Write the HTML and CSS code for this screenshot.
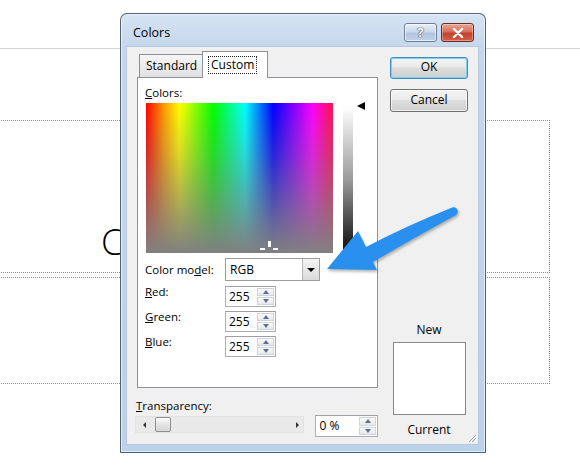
FILE: index.html
```html
<!DOCTYPE html>
<html>
<head>
<meta charset="utf-8">
<link rel="stylesheet" href="styles.css">
</head>
<body>
<div class="slide">
  <div class="topline"></div>
  <div class="ph ph-title"><span class="ph-text">C</span></div>
  <div class="ph ph-sub"></div>
</div>

<div class="dialog">
  <div class="titlebar">
    <span class="title">Colors</span>
    <div class="caption-btns">
      <div class="cbtn help">?</div>
      <div class="cbtn close">
        <svg width="12" height="10" viewBox="0 0 12 10"><path d="M2 1 L10 9 M10 1 L2 9" stroke="#fff" stroke-width="2.4" stroke-linecap="round"/></svg>
      </div>
    </div>
  </div>
  <div class="client">
    <div class="leftcol">
      <div class="tabs">
        <div class="tab">Standard</div>
        <div class="tab active"><span class="focus">Custom</span></div>
      </div>
      <div class="panel">
        <div class="lbl lbl-colors"><u>C</u>olors:</div>
        <div class="spec-row">
          <div class="spectrum">
            <span class="cross cv"></span>
            <span class="cross chl"></span>
            <span class="cross chr"></span>
          </div>
          <div class="lum"></div>
          <div class="lum-arrow"></div>
        </div>
        <div class="model-row">
          <div class="lbl rowlbl">Color mo<u>d</u>el:</div>
          <div class="select">
            <span class="sel-text">RGB</span>
            <span class="sel-btn"><span class="tri-down"></span></span>
          </div>
        </div>
        <div class="rgb-row first">
          <div class="lbl rowlbl"><u>R</u>ed:</div>
          <div class="spin"><span class="spin-val">255</span><span class="spinner"><span class="sp-up"><i></i></span><span class="sp-down"><i></i></span></span></div>
        </div>
        <div class="rgb-row">
          <div class="lbl rowlbl"><u>G</u>reen:</div>
          <div class="spin"><span class="spin-val">255</span><span class="spinner"><span class="sp-up"><i></i></span><span class="sp-down"><i></i></span></span></div>
        </div>
        <div class="rgb-row">
          <div class="lbl rowlbl"><u>B</u>lue:</div>
          <div class="spin"><span class="spin-val">255</span><span class="spinner"><span class="sp-up"><i></i></span><span class="sp-down"><i></i></span></span></div>
        </div>
      </div>
      <div class="lbl lbl-transp"><u>T</u>ransparency:</div>
      <div class="transp-row">
        <div class="slider">
          <span class="sl-left"></span>
          <span class="thumb"></span>
          <span class="sl-right"></span>
        </div>
        <div class="spin pct"><span class="spin-val">0 %</span><span class="spinner"><span class="sp-up"><i></i></span><span class="sp-down"><i></i></span></span></div>
      </div>
    </div>
    <div class="rightcol">
      <div class="btn default">OK</div>
      <div class="btn cancel">Cancel</div>
      <div class="preview">
        <div class="prev-lbl">New</div>
        <div class="prev-box"></div>
        <div class="prev-lbl cur">Current</div>
      </div>
    </div>
    <svg class="grip" width="10" height="10" viewBox="0 0 10 10">
      <path d="M9 2 L2 9 M9 5 L5 9" stroke="#9aa3ad" stroke-width="1"/>
      <path d="M10 3 L3 10 M10 6 L6 10" stroke="#fff" stroke-width="1"/>
    </svg>
  </div>
</div>

<svg class="arrow" width="580" height="469" viewBox="0 0 580 469">
  <path d="M327 269 L358 231 L366 247 Q406 226 451 208 A4 4 0 0 1 456 215 Q412 239 373 262 L377 270 Z" fill="#2a90ef"/>
</svg>
</body>
</html>
```

FILE: styles.css
```css
* { box-sizing: border-box; }
html, body { margin: 0; padding: 0; }
body {
  width: 580px;
  height: 469px;
  overflow: hidden;
  position: relative;
  background: #fff;
  font-family: "Open Sans", "Noto Sans", sans-serif;
  font-size: 11.5px;
  color: #000;
}
u { text-decoration: underline; text-underline-offset: 1px; }

/* background slide */
.topline { height: 1px; background: #d4d4d4; margin-top: 48px; }
.ph { border: 1px dotted #8a8a8a; margin-left: -10px; width: 560px; }
.ph-title { margin-top: 71px; height: 153px; padding: 103px 0 0 110px; }
.ph-sub { margin-top: 4px; height: 107px; }
.ph-text {
  display: block;
  font-size: 36px;
  line-height: 36px;
  font-weight: 300;
  white-space: nowrap;
}

/* dialog window */
.dialog {
  position: absolute;
  left: 120px;
  top: 13px;
  width: 366px;
  height: 440px;
  border: 1px solid #56616e;
  border-bottom-color: #3f6683;
  border-radius: 7px 7px 1px 1px;
  background: linear-gradient(180deg, #d6e4f3 0, #c4d7ec 34px, #bcd2ea 100%);
  box-shadow: inset 0 0 0 1px rgba(255,255,255,0.55);
  display: flex;
  flex-direction: column;
  padding: 0 6px 7px 5px;
}
.titlebar {
  height: 32px;
  display: flex;
  align-items: center;
  padding: 6px 5px 0 7px;
}
.title { font-size: 12.5px; line-height: 26px; flex: 1; }
.caption-btns { display: flex; gap: 4px; align-self: flex-start; margin-top: 3px; }
.cbtn {
  width: 33px;
  height: 19px;
  border-radius: 3px;
  display: flex;
  align-items: center;
  justify-content: center;
}
.help {
  border: 1px solid #6f7f95;
  background: linear-gradient(180deg, #e7eef8 0, #cbd9ea 45%, #b2c6de 55%, #bfd1e6 100%);
  box-shadow: inset 0 0 0 1px rgba(255,255,255,0.6);
  color: #fff;
  font-weight: 700;
  font-size: 13px;
  line-height: 17px;
  text-shadow: 0 0 1px #3b4a60, 0 0 1px #3b4a60, 0 0 1px #3b4a60;
}
.close {
  border: 1px solid #6d2a20;
  background: linear-gradient(180deg, #e8a696 0, #d6705c 45%, #c2422c 55%, #d2614a 100%);
  box-shadow: inset 0 0 0 1px rgba(255,255,255,0.35);
}

.client {
  flex: 1;
  position: relative;
  background: #f0f0f0;
  border: 1px solid #b7c8dc;
  display: flex;
  padding: 4px 0 0 10px;
}
.leftcol { width: 241px; display: flex; flex-direction: column; }
.tabs {
  height: 26px;
  display: flex;
  align-items: flex-end;
  padding-left: 2px;
  position: relative;
  z-index: 1;
}
.tab {
  width: 64px;
  height: 23px;
  border: 1px solid #8e9197;
  border-bottom: 0;
  background: linear-gradient(180deg, #f6f6f6, #e1e1e1);
  line-height: 21px;
  padding-left: 6px;
  font-size: 12px;
}
.tab.active {
  width: 66px;
  margin-left: -1px;
  height: 27px;
  margin-bottom: -1px;
  background: #fff;
  padding: 4px 0 0 5px;
  line-height: 16px;
}
.focus { display: inline-block; border: 1px dotted #222; padding: 0 2px; }

.panel {
  height: 311px;
  border: 1px solid #8e9197;
  background: #fff;
  padding-left: 8px;
}
.lbl { line-height: 16px; white-space: nowrap; }
.lbl-colors { margin-top: 7px; margin-left: -1px; margin-bottom: 2px; }
.spec-row { display: flex; height: 150px; align-items: flex-start; }
.spectrum {
  position: relative;
  width: 187px;
  height: 150px;
  background:
    linear-gradient(180deg, rgba(128,128,128,0) 0%, rgba(128,128,128,0.3) 35%, #808080 100%),
    linear-gradient(90deg, #ff0000 0%, #ffa000 10%, #ffff00 18%, #00ff00 36%, #00ffff 53%, #0000ff 68%, #ff00ff 89%, #ff1050 100%);
}
.cross { position: absolute; background: #fff; }
.cv { left: 122px; top: 138px; width: 3px; height: 6px; }
.chl { left: 114px; top: 145px; width: 5px; height: 2px; }
.chr { left: 127px; top: 145px; width: 5px; height: 2px; }
.lum {
  margin-left: 10px;
  margin-top: 7px;
  width: 10px;
  height: 140px;
  background: linear-gradient(180deg, #fafafa 0%, #9a9a9a 50%, #101010 100%);
}
.lum-arrow {
  margin-left: 4px;
  margin-top: -1px;
  width: 0;
  height: 0;
  border-top: 4.5px solid transparent;
  border-bottom: 4.5px solid transparent;
  border-right: 8px solid #000;
}

.model-row { margin-top: 5px; display: flex; align-items: center; height: 23px; }
.rowlbl { width: 80px; margin-left: -1px; }
.select {
  width: 95px;
  height: 23px;
  border: 1px solid #9c9c9c;
  background: #fff;
  display: flex;
}
.sel-text { flex: 1; padding-left: 4px; line-height: 21px; font-size: 12px; }
.sel-btn {
  width: 17px;
  height: 21px;
  border-left: 1px solid #b4b4b4;
  background: linear-gradient(180deg, #f4f4f4, #dadada);
  display: flex;
  align-items: center;
  justify-content: center;
}
.tri-down {
  width: 0; height: 0;
  border-left: 4px solid transparent;
  border-right: 4px solid transparent;
  border-top: 4px solid #000;
}

.rgb-row { display: flex; align-items: flex-start; height: 21px; margin-top: 4px; }
.rgb-row.first { margin-top: 5px; }
.rgb-row .rowlbl { line-height: 12px; }
.spin {
  width: 51px;
  height: 21px;
  border: 1px solid #abadb3;
  border-top-color: #9ea0a6;
  background: #fff;
  display: flex;
  padding: 1px;
}
.spin-val { flex: 1; padding-left: 2px; line-height: 17px; font-size: 12px; }
.spinner { width: 17px; display: flex; flex-direction: column; gap: 1px; }
.sp-up, .sp-down {
  flex: 1;
  border: 1px solid #d0d3d8;
  background: linear-gradient(180deg, #fafafa, #e6e8ec);
  display: flex;
  align-items: center;
  justify-content: center;
}
.sp-up i, .sp-down i {
  display: block;
  width: 0; height: 0;
  border-left: 3.5px solid transparent;
  border-right: 3.5px solid transparent;
}
.sp-up i { border-bottom: 4px solid #5d6f98; }
.sp-down i { border-top: 4px solid #5d6f98; }

.lbl-transp { margin-top: 10px; margin-left: -1px; line-height: 15px; }
.transp-row { display: flex; align-items: flex-start; margin-top: 2px; }
.slider {
  position: relative;
  margin-left: -2px;
  margin-top: 1px;
  width: 170px;
  height: 17px;
  background: #e9e9e9;
  border: 1px solid #e2e2e2;
}
.sl-left, .sl-right {
  position: absolute;
  top: 5px;
  width: 0; height: 0;
  border-top: 3px solid transparent;
  border-bottom: 3px solid transparent;
}
.sl-left { left: 7px; border-right: 3px solid #333; }
.sl-right { left: 160px; border-left: 3px solid #333; }
.thumb {
  position: absolute;
  left: 19px;
  top: 0;
  width: 16px;
  height: 15px;
  border: 1px solid #8e8f8f;
  border-radius: 2px;
  background: linear-gradient(180deg, #fdfdfd, #e4e4e4 50%, #d6d6d6);
}
.pct { margin-left: 11px; width: 64px; height: 22px; }
.pct .spin-val { line-height: 18px; padding-left: 3px; }

.rightcol { width: 78px; margin-left: 12px; display: flex; flex-direction: column; }
.btn {
  border-radius: 3px;
  text-align: center;
  font-size: 12px;
  background: linear-gradient(180deg, #f3f3f3 0, #ebebeb 45%, #dddddd 50%, #cfcfcf 100%);
}
.btn.default {
  margin-top: 6px;
  height: 22px;
  line-height: 18px;
  border: 1px solid #3d8ec6;
  box-shadow: inset 0 0 0 1px #79d3f3;
}
.btn.cancel {
  margin-top: 10px;
  height: 23px;
  line-height: 20px;
  border: 1px solid #707070;
  box-shadow: inset 0 0 0 1px rgba(255,255,255,0.7);
}
.preview { margin-top: auto; padding-bottom: 7px; display: flex; flex-direction: column; align-items: center; }
.prev-lbl { line-height: 15px; font-size: 12px; }
.prev-box { width: 73px; height: 73px; margin-top: 5px; background: #fff; border: 1px solid #8a8a8a; }
.prev-lbl.cur { margin-top: 7px; }

.grip { position: absolute; right: 1px; bottom: 1px; }

.arrow {
  position: absolute;
  left: 0;
  top: 0;
  pointer-events: none;
  filter: drop-shadow(1px 2px 1.5px rgba(0,0,0,0.3));
}
```
